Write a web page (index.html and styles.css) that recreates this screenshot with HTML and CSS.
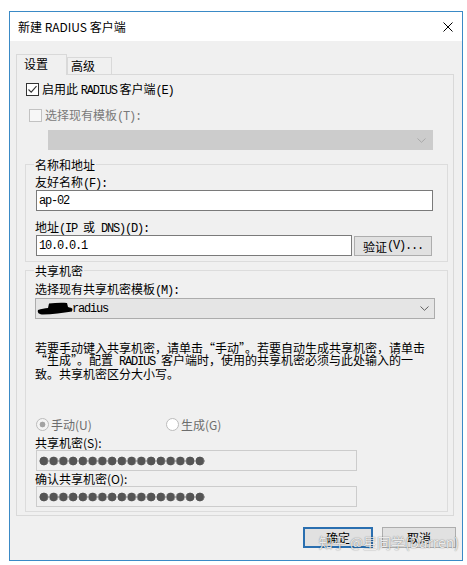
FILE: index.html
```html
<!DOCTYPE html>
<html lang="zh-CN">
<head>
<meta charset="utf-8">
<title>新建 RADIUS 客户端</title>
<link rel="stylesheet" href="styles.css">
</head>
<body>
<div class="window">
  <div class="titlebar">
    <span class="title">新建 RADIUS 客户端</span>
    <svg class="close" width="10" height="10" viewBox="0 0 10 10"><path d="M0.5 0.5 L9.5 9.5 M9.5 0.5 L0.5 9.5" stroke="#000" stroke-width="1" fill="none"/></svg>
  </div>
  <div class="client">
    <div class="tabs">
      <div class="tab active">设置</div>
      <div class="tab inactive">高级</div>
    </div>
    <div class="panel">
      <div class="check-row r1">
        <span class="cb checked"><svg width="11" height="11" viewBox="0 0 11 11"><polyline points="1.5,5.5 4.2,8.2 9.5,2.2" fill="none" stroke="#333" stroke-width="1.1"/></svg></span>
        <span>启用此 <span class="a">RADIUS</span> 客户端<span class="a">(E)</span></span>
      </div>
      <div class="check-row r2">
        <span class="cb dis"></span>
        <span>选择现有模板<span class="a">(T):</span></span>
      </div>
      <div class="select sel-dis">
        <svg class="chev" width="9" height="5" viewBox="0 0 9 5"><polyline points="0.5,0.5 4.5,4.3 8.5,0.5" fill="none" stroke="#a9a9a9" stroke-width="1"/></svg>
      </div>

      <div class="group g1">
        <div class="legend">名称和地址</div>
        <div class="label lab1">友好名称<span class="a">(F):</span></div>
        <div class="input w-name"><span class="a">ap-02</span></div>
        <div class="label lab2">地址<span class="a">(IP </span>或<span class="a"> DNS)(D):</span></div>
        <div class="addr-row">
          <div class="input w-addr"><span class="a">10.0.0.1</span></div>
          <div class="btn btn-verify">验证<span class="a">(V)...</span></div>
        </div>
      </div>

      <div class="group g2">
        <div class="legend">共享机密</div>
        <div class="label lab3">选择现有共享机密模板<span class="a">(M):</span></div>
        <div class="select sel2">
          <span class="sel-val">
            <svg class="blob" width="36" height="14" viewBox="0 0 36 14"><path d="M1 8 C4 6.5 8 6.5 11 6 L12 1.5 C18 0.8 25 0.5 30 1 L31 5 C33 5.5 35 6 35.5 7 L35 9.5 C26 11 15 12.5 6 12.5 C2.5 12.5 0 11 1 8 Z" fill="#000"/></svg><span class="a">radius</span>
          </span>
          <svg class="chev" width="9" height="5" viewBox="0 0 9 5"><polyline points="0.5,0.5 4.5,4.3 8.5,0.5" fill="none" stroke="#606060" stroke-width="1"/></svg>
        </div>
        <div class="para">若要手动键入共享机密，请单击“手动”。若要自动生成共享机密，请单击<br>“生成”。配置<span class="a"> RADIUS </span>客户端时，使用的共享机密必须与此处输入的一<br>致。共享机密区分大小写。</div>
        <div class="radio-row">
          <div class="radio-item first"><span class="radio on"></span><span>手动(U)</span></div>
          <div class="radio-item"><span class="radio"></span><span>生成(G)</span></div>
        </div>
        <div class="label lab4">共享机密(S):</div>
        <div class="pw"><span class="dots"></span></div>
        <div class="label lab5">确认共享机密(O):</div>
        <div class="pw"><span class="dots"></span></div>
      </div>
    </div>
    <div class="buttons">
      <div class="btn btn-ok">确定</div>
      <div class="btn btn-cancel">取消</div>
    </div>
  </div>
  <div class="watermark">知乎 @星同学(Darren)</div>
</div>
</body>
</html>
```

FILE: styles.css
```css
body {
  margin: 0;
  background: #ffffff;
  font-family: "Noto Sans CJK SC", "Noto Sans", sans-serif;
  font-size: 12px;
  color: #000;
}

.a {
  font-family: "Liberation Mono", "Noto Sans CJK SC", monospace;
  font-size: 12px;
  letter-spacing: -1.2px;
}

.window {
  position: relative;
  margin: 11px 0 0 9px;
  width: 454px;
  height: 550px;
  box-sizing: border-box;
  border: 1px solid #3a8ac6;
  display: flex;
  flex-direction: column;
}

.titlebar {
  height: 29px;
  flex: none;
  background: #fff;
  display: flex;
  align-items: center;
  justify-content: space-between;
  padding: 0 9px 0 8px;
}

.title {
  font-size: 12px;
  line-height: 16px;
}

.close {
  display: block;
}

.client {
  flex: 1;
  background: #f0f0f0;
  padding: 13px 8px 0 6px;
  display: flex;
  flex-direction: column;
}

.tabs {
  display: flex;
  align-items: flex-end;
  height: 21px;
  flex: none;
}

.tab {
  box-sizing: border-box;
  border: 1px solid #d9d9d9;
  border-bottom: none;
  background: #f0f0f0;
}

.tab.active {
  position: relative;
  z-index: 1;
  width: 51px;
  height: 21px;
  padding-left: 7px;
  line-height: 18px;
}

.tab.inactive {
  width: 45px;
  height: 17px;
  margin-bottom: 1px;
  padding-left: 3px;
  line-height: 16px;
}

.panel {
  margin-top: -1px;
  height: 442px;
  flex: none;
  box-sizing: border-box;
  border: 1px solid #d9d9d9;
  display: flex;
  flex-direction: column;
  align-items: flex-start;
}

.check-row {
  display: flex;
  align-items: center;
  gap: 3px;
  height: 13px;
  line-height: 14px;
}

.r1 {
  margin: 8px 0 0 9px;
}

.r2 {
  margin: 13px 0 0 12px;
  color: #7a7a7a;
}

.cb {
  width: 13px;
  height: 13px;
  box-sizing: border-box;
  border: 1px solid #333;
  background: #fff;
  display: block;
  flex: none;
}

.cb svg {
  display: block;
}

.cb.dis {
  border-color: #c2c2c2;
  background: #f7f7f7;
}

.select {
  box-sizing: border-box;
  display: flex;
  align-items: center;
  justify-content: space-between;
}

.sel-dis {
  margin: 8px 0 0 31px;
  width: 385px;
  height: 20px;
  background: #cccccc;
  border: 1px solid #cccccc;
  justify-content: flex-end;
  padding-right: 6px;
}

.chev {
  display: block;
}

.group {
  box-sizing: border-box;
  border: 1px solid #dcdcdc;
  margin-left: 8px;
  width: 423px;
  padding: 0 0 0 9px;
  display: flex;
  flex-direction: column;
  align-items: flex-start;
}

.g1 {
  margin-top: 14px;
  padding-bottom: 5px;
}

.g2 {
  margin-top: 8px;
  padding-bottom: 4px;
}

.legend {
  margin: -7px 0 0 -1px;
  padding: 0 1px;
  height: 14px;
  line-height: 14px;
  background: #f0f0f0;
}

.label {
  height: 14px;
  line-height: 14px;
}

.lab1 { margin-top: 3px; }
.lab2 { margin-top: 9px; }
.lab3 { margin-top: 4px; }
.lab4 { margin-top: 5px; }
.lab5 { margin-top: 1px; }

.input {
  box-sizing: border-box;
  height: 21px;
  margin: 1px 0 0 1px;
  border: 1px solid #7a7a7a;
  background: #fff;
  padding-left: 2px;
  display: flex;
  align-items: center;
}

.w-name { width: 397px; }

.addr-row {
  display: flex;
  align-items: flex-end;
  gap: 2px;
  margin: 1px 0 0 1px;
}

.addr-row .input {
  margin: 0;
}

.w-addr { width: 316px; }

.btn {
  box-sizing: border-box;
  height: 21px;
  background: #e1e1e1;
  border: 1px solid #adadad;
  display: flex;
  align-items: center;
  justify-content: center;
}

.btn-verify {
  width: 78px;
  height: 20px;
}

.sel2 {
  margin-top: 2px;
  width: 400px;
  height: 21px;
  background: #e5e5e5;
  border: 1px solid #acacac;
  padding: 0 5px 0 1px;
}

.sel-val {
  display: flex;
  align-items: center;
}

.blob {
  display: block;
  margin-right: -1px;
}

.para {
  margin-top: 23px;
  line-height: 12px;
  white-space: nowrap;
}

.radio-row {
  margin: 37px 0 0 1px;
  height: 14px;
  display: flex;
  align-items: center;
  color: #6d6d6d;
}

.radio-item {
  display: flex;
  align-items: center;
  gap: 2px;
}

.radio-item.first {
  width: 130px;
}

.radio {
  width: 13px;
  height: 13px;
  box-sizing: border-box;
  border-radius: 50%;
  border: 1px solid #bcbcbc;
  background: #fff;
  display: block;
}

.radio.on {
  background: radial-gradient(circle, #a3a3a3 0 2.6px, #f4f4f4 3.2px);
}

.pw {
  box-sizing: border-box;
  margin-left: 1px;
  width: 321px;
  height: 21px;
  border: 1px solid #cccccc;
  background: #f0f0f0;
  display: flex;
  align-items: center;
}

.dots {
  display: block;
  margin-left: 2px;
  width: 166px;
  height: 10px;
  background: radial-gradient(circle, #555 0 4.1px, rgba(85,85,85,0) 4.7px) 0 0 / 9.76px 10px repeat-x;
}

.buttons {
  display: flex;
  justify-content: flex-end;
  gap: 9px;
  margin: 11px -2px 0 0;
}

.btn-ok {
  width: 70px;
  border: 2px solid #2a6fb0;
}

.btn-cancel {
  width: 74px;
}

.watermark {
  position: absolute;
  right: 3px;
  bottom: 9px;
  font-size: 14px;
  line-height: 17px;
  color: rgba(255, 255, 255, 0.85);
  text-shadow: 0 0 1px rgba(0, 0, 0, 0.45), 0 0 2px rgba(0, 0, 0, 0.2);
}
```
